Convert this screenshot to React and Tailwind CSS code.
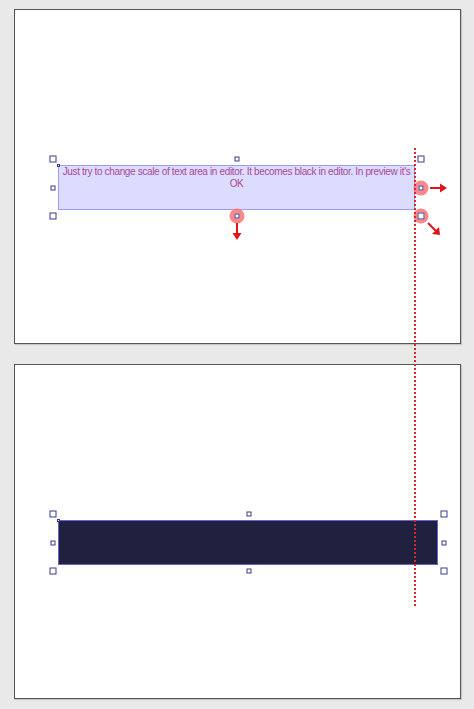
import React from "react";

// handle positions on the selection frame (full class names so tailwind picks them up)
const SPOTS = {
    tl: "left-0 top-0",
    tc: "left-1/2 top-0",
    tr: "left-full top-0",
    ml: "left-0 top-1/2",
    mr: "left-full top-1/2",
    bl: "left-0 top-full",
    bc: "left-1/2 top-full",
    br: "left-full top-full",
};

function Handle({ spot, big, glow }) {
    return (
        <div className={`absolute ${SPOTS[spot]} -translate-x-1/2 -translate-y-1/2 flex items-center justify-center`}>
            {glow && <div className="absolute w-[15px] h-[15px] rounded-full bg-[#ff6a6a]/80" />}
            <div
                className={`relative border border-[#3a3a8c] bg-white ${
                    big ? "w-[7px] h-[7px]" : "w-[5px] h-[5px]"
                }`}
            />
        </div>
    );
}

function ArrowDown() {
    return (
        <svg width="12" height="18" viewBox="0 0 12 18">
            <path d="M6 0 V12" stroke="#e0151b" strokeWidth="2" />
            <path d="M1.5 10 L6 17 L10.5 10 Z" fill="#e0151b" />
        </svg>
    );
}

function ArrowRight() {
    return (
        <svg width="18" height="12" viewBox="0 0 18 12">
            <path d="M0 6 H12" stroke="#e0151b" strokeWidth="2" />
            <path d="M10 1.5 L17 6 L10 10.5 Z" fill="#e0151b" />
        </svg>
    );
}

function ArrowDiag() {
    return (
        <svg width="14" height="14" viewBox="0 0 14 14">
            <path d="M1 1 L9 9" stroke="#e0151b" strokeWidth="2" />
            <path d="M5 12 L13 13 L12 5 Z" fill="#e0151b" />
        </svg>
    );
}

function Selection({ glow = false, children }) {
    return (
        <div className="relative w-fit">
            {children}
            <div className="absolute left-[-5px] top-[-6px] right-[-6px] bottom-[-6px] pointer-events-none">
                <Handle spot="tl" big />
                <Handle spot="tc" />
                <Handle spot="tr" big />
                <Handle spot="ml" />
                <Handle spot="mr" glow={glow} />
                <Handle spot="bl" big />
                <Handle spot="bc" glow={glow} />
                <Handle spot="br" big glow={glow} />
                {glow && (
                    <>
                        <div className="absolute left-1/2 top-full -translate-x-1/2 mt-[7px]">
                            <ArrowDown />
                        </div>
                        <div className="absolute left-full top-1/2 -translate-y-1/2 ml-[9px]">
                            <ArrowRight />
                        </div>
                        <div className="absolute left-full top-full ml-[6px] mt-[6px]">
                            <ArrowDiag />
                        </div>
                    </>
                )}
            </div>
            {/* tiny anchor at the top-left corner */}
            <div className="absolute left-[-1px] top-[-1px] w-[3px] h-[3px] border border-[#3a3a8c] bg-white" />
        </div>
    );
}

const App = () => {
    return (
        <main
            className="relative min-h-screen w-full bg-[#e9e9e9] pt-[9px] pl-[14px] flex flex-col gap-[20px]"
            style={{ fontFamily: '"Liberation Sans", Arial, sans-serif' }}
        >
            {/* EDITOR PAGE */}
            <section className="w-[447px] h-[335px] bg-white border border-[#555] shadow-[1px_1px_1px_rgba(0,0,0,0.15)] pt-[155px] pl-[43px]">
                <Selection glow>
                    <div className="w-[357px] h-[45px] bg-[#dcdcff] border border-[#9c9cf5] text-center text-[10px] leading-[12px] text-[#a8489c] tracking-[-0.35px]">
                        Just try to change scale of text area in editor. It becomes black in editor. In preview it's OK
                    </div>
                </Selection>
            </section>

            {/* PREVIEW PAGE */}
            <section className="w-[447px] h-[335px] bg-white border border-[#555] shadow-[1px_1px_1px_rgba(0,0,0,0.15)] pt-[155px] pl-[43px]">
                <Selection>
                    <div className="w-[380px] h-[45px] bg-[#20203f] border border-[#6b63c9]" />
                </Selection>
            </section>

            {/* GUIDE LINE */}
            <div className="absolute left-[414px] top-[148px] h-[458px] w-0 border-l-2 border-dotted border-[#d8282e]" />
        </main>
    );
};

export default App;
